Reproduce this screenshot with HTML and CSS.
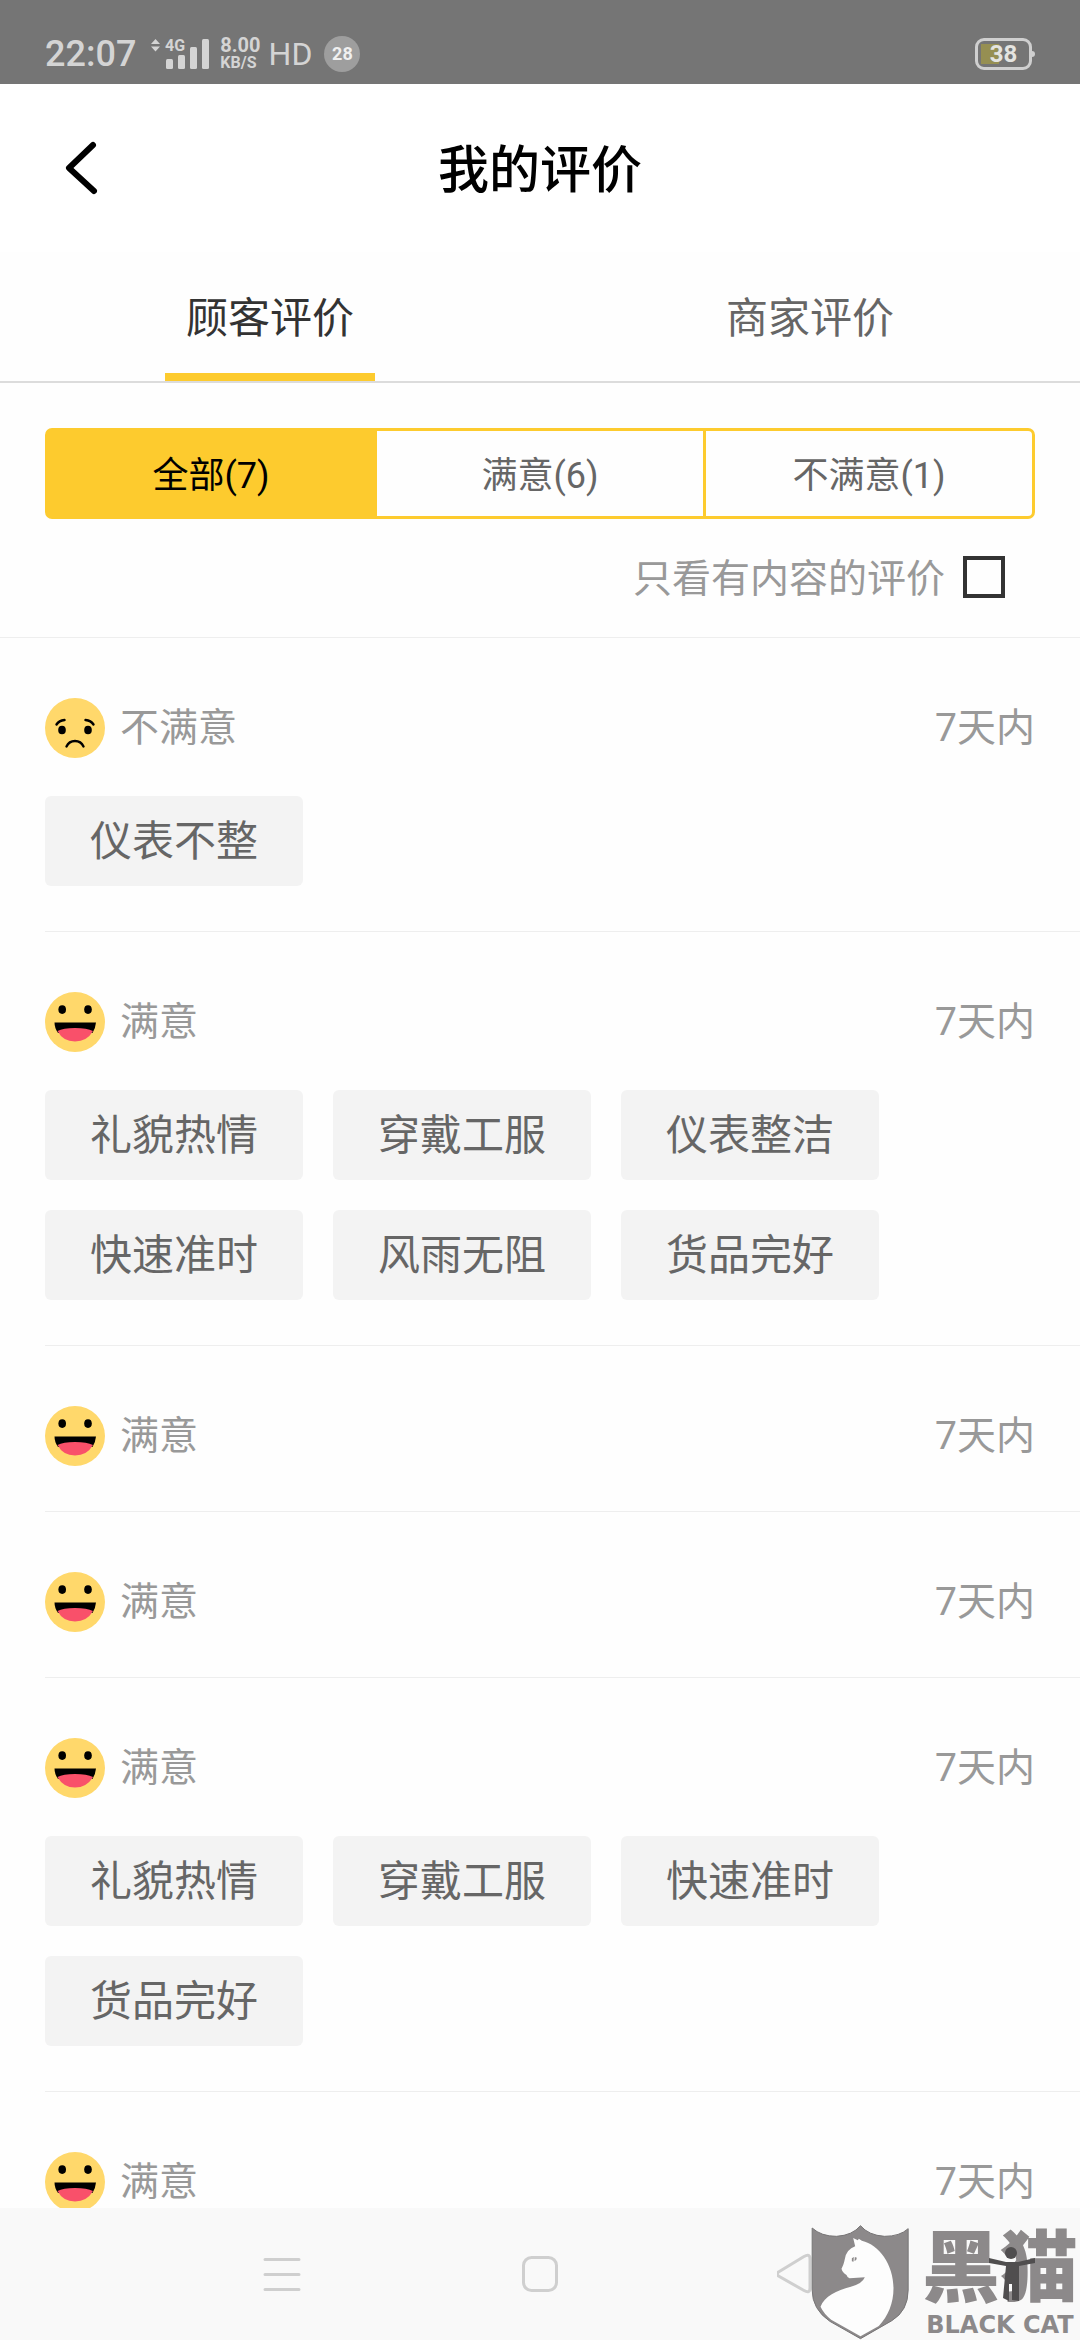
FILE: index.html
```
<!DOCTYPE html>
<html lang="zh-CN">
<head>
    <meta charset="UTF-8">
    <meta name="viewport" content="width=device-width, initial-scale=1.0">
    <title>我的评价</title>
    <link rel="stylesheet" href="styles.css">
</head>
<body>

    <!-- Face icons shared by the reviews -->
    <svg class="sprite" aria-hidden="true">
        <symbol id="face-sad" viewBox="0 0 60 60">
            <circle cx="30" cy="30" r="30" fill="#ffd86b"/>
            <ellipse cx="17" cy="32" rx="3.8" ry="4.3"/>
            <ellipse cx="43" cy="32" rx="3.8" ry="4.3"/>
            <path d="M11.5 26.5Q14 22.5 19.5 22M40.5 22Q46 22.5 48.5 26.5M21.5 48.5Q24 43 30 43T38.5 48.5" fill="none" stroke="#000" stroke-width="2.4" stroke-linecap="round"/>
        </symbol>
        <symbol id="face-happy" viewBox="0 0 60 60">
            <circle cx="30" cy="30" r="30" fill="#ffd86b"/>
            <ellipse cx="17.2" cy="17.6" rx="3.8" ry="4.3"/>
            <ellipse cx="43" cy="17.6" rx="3.8" ry="4.3"/>
            <path d="M9.5 30.5H51Q50.5 36 47.5 41H13Q9.5 36 9.5 30.5Z"/>
            <path d="M12.5 39Q18 36 30 36T48 39Q42 49.5 30 49.5T12.5 39Z" fill="#f9506a"/>
        </symbol>
    </svg>

    <div class="screen">

        <!-- Status bar -->
        <div class="status-bar">
            <span class="clock">22:07</span>
            <svg class="signal" viewBox="0 -6 60 44" aria-hidden="true">
                <path d="M1 6L5.5 1L10 6ZM1 8.500L5.500 13.500L10 8.500Z"/>
                <rect x="16" y="21" width="7" height="10" rx="1.500"/>
                <rect x="28" y="17" width="7" height="14" rx="1.500"/>
                <rect x="40" y="9" width="7" height="22" rx="1.500"/>
                <rect x="52" y="1" width="7" height="30" rx="1.500"/>
                <text x="15" y="13" class="network">4G</text>
            </svg>
            <span class="speed"><span>8.00</span><small>KB/S</small></span>
            <span class="hd">HD</span>
            <span class="count">28</span>
            <span class="battery">38</span>
        </div>

        <!-- Header -->
        <header class="header">
            <button class="back" aria-label="返回">
                <svg viewBox="0 0 36 56" aria-hidden="true"><path d="M29 5L5 28L30 51"/></svg>
            </button>
            <h1>我的评价</h1>
        </header>

        <nav class="tabs">
            <a href="#customer" class="tab active">顾客评价</a>
            <a href="#shop" class="tab">商家评价</a>
        </nav>

        <!-- Filters -->
        <div class="filters">
            <div class="segments">
                <button class="segment selected">全部(7)</button>
                <button class="segment">满意(6)</button>
                <button class="segment">不满意(1)</button>
            </div>
            <div class="only-content">
                <label for="only-content">只看有内容的评价</label>
                <input type="checkbox" id="only-content">
            </div>
        </div>

        <!-- Review list -->
        <main class="reviews">
            <article class="review">
                <div class="review-head">
                    <svg class="face"><use href="#face-sad"/></svg>
                    <span>不满意</span>
                    <time>7天内</time>
                </div>
                <ul class="tags">
                    <li>仪表不整</li>
                </ul>
            </article>
            <article class="review">
                <div class="review-head">
                    <svg class="face"><use href="#face-happy"/></svg>
                    <span>满意</span>
                    <time>7天内</time>
                </div>
                <ul class="tags">
                    <li>礼貌热情</li>
                    <li>穿戴工服</li>
                    <li>仪表整洁</li>
                    <li>快速准时</li>
                    <li>风雨无阻</li>
                    <li>货品完好</li>
                </ul>
            </article>
            <article class="review">
                <div class="review-head">
                    <svg class="face"><use href="#face-happy"/></svg>
                    <span>满意</span>
                    <time>7天内</time>
                </div>
            </article>
            <article class="review">
                <div class="review-head">
                    <svg class="face"><use href="#face-happy"/></svg>
                    <span>满意</span>
                    <time>7天内</time>
                </div>
            </article>
            <article class="review">
                <div class="review-head">
                    <svg class="face"><use href="#face-happy"/></svg>
                    <span>满意</span>
                    <time>7天内</time>
                </div>
                <ul class="tags">
                    <li>礼貌热情</li>
                    <li>穿戴工服</li>
                    <li>快速准时</li>
                    <li>货品完好</li>
                </ul>
            </article>
            <article class="review">
                <div class="review-head">
                    <svg class="face"><use href="#face-happy"/></svg>
                    <span>满意</span>
                    <time>7天内</time>
                </div>
            </article>
        </main>

        <!-- System navigation -->
        <footer class="system-nav">
            <button aria-label="菜单">
                <svg viewBox="0 0 42 42"><path d="M4 6.500H38M4 21.500H38M4 36.500H38"/></svg>
            </button>
            <button aria-label="主页">
                <svg viewBox="0 0 42 42"><rect x="4.500" y="4.500" width="33" height="33" rx="8"/></svg>
            </button>
            <button aria-label="后退">
                <svg viewBox="0 0 42 42"><path d="M1.500 19L27 3.500Q33 0 33 6V35Q33 41 27 37.500L1.500 23Q-1 21 1.500 19Z"/></svg>
            </button>

            <!-- Black Cat watermark -->
            <div class="watermark">
                <svg class="shield" viewBox="93 135 291 345" aria-hidden="true">
                    <path d="M95 144Q122 169 168 169Q216 166 240 137Q264 166 312 169Q358 169 383 146V330Q383 392 334 422L240 476L148 424Q95 388 95 330Z" fill="#8c898a" stroke="#777576" stroke-width="3"/>
                    <path d="M218 174L232 181L235 176L244 182C296 194 339 254 339 325C339 370 323 408 295 438L240 469L152 419Q130 401 120 380C132 348 168 331 211 320Q245 312 253 292L207 295Q200 292 198 285Q186 278 183 266C187 258 190 252 193 237Q198 208 224 199Z" fill="#fdfdfd"/>
                    <path d="M214 235L220 231L219 245L214 244ZM223 231L229 233Q229 240 222 243Z" fill="#8c898a"/>
                </svg>
                <div class="brand">
                    <strong>黑猫</strong>
                    <span>BLACK CAT</span>
                </div>
                <svg class="person" viewBox="0 0 48 60" aria-hidden="true">
                    <circle cx="23" cy="9" r="6"/>
                    <path d="M1 14L18 18H30L47 14V19L31 22V57L24 56V40H21V57L15 54L18 22L1 19Z"/>
                </svg>
            </div>
        </footer>
    </div>

</body>
</html>
```
FILE: styles.css
```
* {
    box-sizing: border-box;
}
body {
    margin: 0;
    background-color: #fefefe;
    font-family: Roboto, "Noto Sans CJK SC", sans-serif;
    color: #666;
}
button {
    font-family: inherit;
    background: none;
    border: none;
    padding: 0;
    cursor: pointer;
}
.sprite {
    display: none;
}
.screen {
    display: flex;
    flex-direction: column;
    height: 100vh;
    overflow: hidden;
}

/* Status bar */
.status-bar {
    display: flex;
    align-items: center;
    height: 84px;
    flex-shrink: 0;
    padding: 24px 45px 0;
    background-color: #757575;
    color: #d4d4d4;
}
.clock {
    font-size: 36px;
    font-weight: 500;
}
.signal {
    width: 60px;
    height: 44px;
    margin-left: 14px;
    fill: #d4d4d4;
}
.network {
    font-size: 16px;
    font-weight: 700;
}
.speed {
    display: flex;
    flex-direction: column;
    margin-left: 10px;
    font-size: 20px;
    font-weight: 700;
    line-height: 18px;
}
.speed small {
    font-size: 16px;
}
.hd {
    margin-left: 8px;
    font-size: 32px;
}
.count {
    width: 36px;
    margin-left: 12px;
    border-radius: 50%;
    background-color: #9e9e9e;
    color: #f0f0f0;
    font-size: 18px;
    font-weight: 700;
    line-height: 36px;
    text-align: center;
}
.battery {
    position: relative;
    width: 57px;
    margin-left: auto;
    margin-right: 3px;
    border: 3px solid #cfcfcf;
    border-radius: 9px;
    background: linear-gradient(#968f52, #968f52) 3px 3px / 18px 20px no-repeat;
    color: #e4e4e0;
    font-size: 24px;
    font-weight: 700;
    line-height: 26px;
    text-align: center;
}
.battery::after {
    content: "";
    position: absolute;
    right: -6px;
    top: 10px;
    width: 4px;
    height: 6px;
    border-radius: 0 3px 3px 0;
    background-color: #cfcfcf;
}

/* Header */
.header {
    display: grid;
    grid-template-columns: 60px 1fr 60px;
    align-items: center;
    height: 168px;
    flex-shrink: 0;
    padding: 0 64px;
    background-color: #fff;
}
.back svg {
    display: block;
    width: 36px;
    height: 56px;
    fill: none;
    stroke: #000;
    stroke-width: 6px;
    stroke-linecap: round;
    stroke-linejoin: round;
}
h1 {
    margin: 0;
    padding-bottom: 4px;
    font-size: 51px;
    font-weight: 500;
    color: #000;
    text-align: center;
}
.tabs {
    display: flex;
    flex-shrink: 0;
    border-bottom: 2px solid #dcdcdc;
}
.tab {
    flex: 1;
    display: flex;
    flex-direction: column;
    align-items: center;
    height: 129px;
    padding-top: 37px;
    color: #666;
    font-size: 42px;
    line-height: 60px;
    text-decoration: none;
}
.tab.active {
    color: #333;
}
.tab.active::after {
    content: "";
    width: 210px;
    height: 8px;
    margin-top: auto;
    background-color: #fdcb2e;
}

/* Filters */
.filters {
    flex-shrink: 0;
    padding: 45px 45px 34px;
    border-bottom: 1px solid #eee;
}
.segments {
    display: flex;
    border: 3px solid #fdcb2e;
    border-radius: 7px;
}
.segment {
    flex: 1;
    height: 85px;
    padding-bottom: 3px;
    border-right: 3px solid #fdcb2e;
    color: #666;
    font-size: 36px;
}
.segment:last-child {
    border-right: none;
}
.segment.selected {
    background-color: #fdcb2e;
    color: #000;
}
.only-content {
    display: flex;
    justify-content: flex-end;
    align-items: center;
    gap: 18px;
    margin-top: 32px;
    padding-right: 30px;
    color: #999;
    font-size: 39px;
    line-height: 48px;
}
.only-content label {
    padding-top: 4px;
}
.only-content input {
    appearance: none;
    width: 42px;
    height: 42px;
    margin: 0;
    border: 4px solid #333;
}

/* Reviews */
.reviews {
    flex: 1;
    min-height: 0;
    overflow: hidden;
    padding-left: 45px;
}
.review {
    padding: 60px 45px 45px 0;
    border-bottom: 1px solid #eee;
}
.review-head {
    display: flex;
    align-items: center;
    height: 60px;
    color: #999;
    font-size: 39px;
    line-height: 60px;
}
.face {
    width: 60px;
    height: 60px;
    margin-right: 15px;
}
.review-head time {
    margin-left: auto;
}
.tags {
    display: flex;
    flex-wrap: wrap;
    gap: 30px;
    margin: 38px 0 0;
    padding: 0;
    list-style: none;
}
.tags li {
    padding: 2px 45px 0;
    border-radius: 6px;
    background-color: #f3f3f3;
    font-size: 42px;
    line-height: 88px;
}

/* System navigation */
.system-nav {
    position: relative;
    display: flex;
    justify-content: center;
    align-items: center;
    gap: 216px;
    height: 132px;
    flex-shrink: 0;
    background-color: #f9f9f9;
}
.system-nav button svg {
    display: block;
    width: 42px;
    height: 42px;
    fill: none;
    stroke: #cfcfcf;
    stroke-width: 3px;
    stroke-linecap: round;
}
.watermark {
    position: absolute;
    right: 2px;
    bottom: 0;
    display: flex;
    gap: 13px;
    color: #8c898a;
}
.shield {
    width: 98px;
    height: 115px;
}
.brand {
    display: flex;
    flex-direction: column;
    align-items: center;
}
.brand strong {
    font-size: 78px;
    font-weight: 900;
    line-height: 90px;
}
.brand span {
    font-family: "DejaVu Sans", sans-serif;
    font-size: 24px;
    font-weight: 700;
    line-height: 20px;
    white-space: nowrap;
}
.person {
    position: absolute;
    right: 42px;
    bottom: 36px;
    width: 48px;
    height: 60px;
    fill: #504e4f;
}
```
